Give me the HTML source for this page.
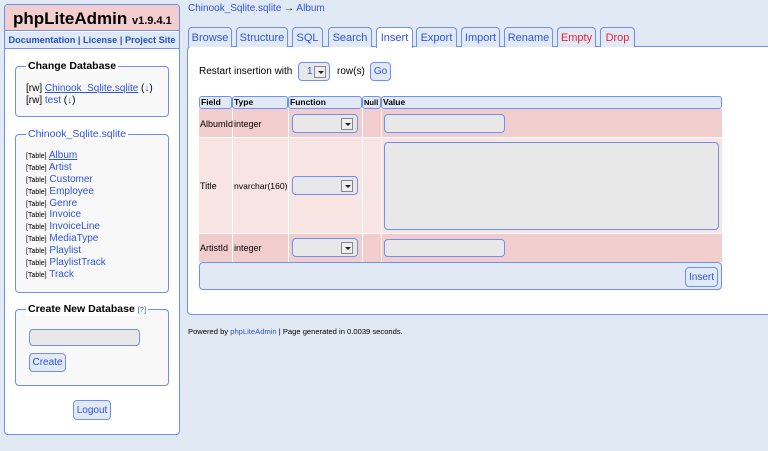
<!DOCTYPE html>
<html><head><meta charset="utf-8"><style>
*{box-sizing:border-box;margin:0;padding:0}
body{width:768px;height:451px;background:#e0e9f4;font-family:"Liberation Sans",Arial,sans-serif;position:relative;overflow:hidden;color:#000}
.a{position:absolute;white-space:nowrap}
a{color:#2f55e0;text-decoration:none}
.bl{border:1px solid #6f8ff5}
.side{left:4px;top:4px;width:176px;height:431px;background:#fff;border-radius:4px}
.hdr{left:5px;top:5px;width:174px;height:26px;background:#f2cece;border-bottom:1px solid #6f8ff5;border-radius:3px 3px 0 0}
.links{left:5px;top:32px;width:174px;height:17px;background:#e0e9f4;border-bottom:1px solid #6f8ff5;font-size:9.2px;font-weight:bold;text-align:center;line-height:17px;color:#2452c8}
.links a{color:#2452c8}
.fs{background:#f8f8f8;border-radius:4px;border:1px solid #6f8ff5}
.leg{background:#fff;padding:0 2px;font-size:10.5px;line-height:12px}
.tab{top:27px;height:20px;border:1px solid #6f8ff5;border-bottom:none;border-radius:4px 4px 0 0;background:#e0e9f4;font-size:11px;line-height:20px;text-align:center;color:#2f55e0}
.red{color:#f0203a}
.panel{left:187px;top:46px;width:590px;height:269px;background:#fff;border-radius:4px}
.th{top:96px;height:13px;background:#e0e9f4;border:1px solid #6f8ff5;border-radius:3px;font-size:8.5px;font-weight:bold;line-height:11px;padding-left:1px;overflow:hidden}
.sel{height:19px;width:66px;border:1px solid #6f8ff5;border-radius:4px;background:#e8e8e8}
.sel i{position:absolute;right:4px;top:3px;width:12px;height:12px;border:1px solid #888;background:#eee}
.sel i:after{content:"";position:absolute;left:3px;top:4px;border:3px solid transparent;border-top:3px solid #222}
.inp{border:1px solid #6f8ff5;border-radius:4px;background:#e8e8e8}
.td{font-size:9px;line-height:10px}
.btn{border:1px solid #6f8ff5;border-radius:4px;background:#e0e9f4;font-size:10px;color:#2f55e0;display:flex;align-items:center;justify-content:center}
.tl div{font-size:10px;line-height:11.9px;height:11.9px}
.tl small{font-size:7px;color:#000}
</style></head><body>
<div class="a side bl"></div>
<div class="a hdr"></div>
<div class="a" style="left:13px;top:8px;font-size:17px;font-weight:bold;line-height:22px">phpLiteAdmin <span style="font-size:11px">v1.9.4.1</span></div>
<div class="a links"><a>Documentation</a> | <a>License</a> | <a>Project Site</a></div>

<div class="a fs" style="left:15px;top:66px;width:154px;height:51px"></div>
<div class="a leg" style="left:26px;top:60px;font-weight:bold">Change Database</div>
<div class="a" style="left:26px;top:83px;font-size:10px;line-height:12px">[rw] <a style="text-decoration:underline">Chinook_Sqlite.sqlite</a> (<a>↓</a>)<br>[rw] <a>test</a> (<a>↓</a>)</div>

<div class="a fs" style="left:15px;top:134px;width:154px;height:159px"></div>
<div class="a leg" style="left:26px;top:128px;color:#2f55e0">Chinook_Sqlite.sqlite</div>
<div class="a tl" style="left:26px;top:150px">
<div><small>[Table]</small> <a style="text-decoration:underline">Album</a></div>
<div><small>[Table]</small> <a>Artist</a></div>
<div><small>[Table]</small> <a>Customer</a></div>
<div><small>[Table]</small> <a>Employee</a></div>
<div><small>[Table]</small> <a>Genre</a></div>
<div><small>[Table]</small> <a>Invoice</a></div>
<div><small>[Table]</small> <a>InvoiceLine</a></div>
<div><small>[Table]</small> <a>MediaType</a></div>
<div><small>[Table]</small> <a>Playlist</a></div>
<div><small>[Table]</small> <a>PlaylistTrack</a></div>
<div><small>[Table]</small> <a>Track</a></div></div>

<div class="a fs" style="left:15px;top:309px;width:154px;height:77px"></div>
<div class="a leg" style="left:26px;top:303px;font-weight:bold">Create New Database <a style="font-size:7.5px;font-weight:normal">[?]</a></div>
<div class="a inp" style="left:29px;top:329px;width:111px;height:17px"></div>
<div class="a btn" style="left:29px;top:353px;width:37px;height:19px">Create</div>
<div class="a btn" style="left:73px;top:400px;width:38px;height:20px">Logout</div>

<div class="a" style="left:188px;top:3px;font-size:10px;line-height:12px"><a>Chinook_Sqlite.sqlite</a> → <a>Album</a></div>
<div class="a panel bl"></div>
<div class="a tab" style="left:188px;width:44px">Browse</div>
<div class="a tab" style="left:236px;width:52px">Structure</div>
<div class="a tab" style="left:292px;width:31px">SQL</div>
<div class="a tab" style="left:328px;width:44px">Search</div>
<div class="a tab" style="left:376px;width:37px;height:21px;background:#fff;z-index:2">Insert</div>
<div class="a tab" style="left:416px;width:41px">Export</div>
<div class="a tab" style="left:461px;width:39px">Import</div>
<div class="a tab" style="left:504px;width:49px">Rename</div>
<div class="a tab red" style="left:557px;width:39px">Empty</div>
<div class="a tab red" style="left:600px;width:35px">Drop</div>

<div class="a" style="left:199px;top:65px;font-size:10px;line-height:13px">Restart insertion with</div>
<div class="a sel" style="left:298px;top:62px;width:32px"><span class="a" style="left:8px;top:3px;font-size:10px;color:#2f55e0">1</span><i style="right:3px"></i></div>
<div class="a" style="left:337px;top:65px;font-size:10px;line-height:13px">row(s)</div>
<div class="a btn" style="left:370px;top:62px;width:21px;height:19px">Go</div>

<div class="a th" style="left:199px;width:33px">Field</div>
<div class="a th" style="left:232px;width:56px">Type</div>
<div class="a th" style="left:288px;width:74px">Function</div>
<div class="a th" style="left:362px;width:19px;font-size:7.5px">Null</div>
<div class="a th" style="left:381px;width:341px">Value</div>

<div class="a" style="left:199px;top:109px;width:523px;height:28px;background:#f2cdcd"></div>
<div class="a" style="left:199px;top:138px;width:523px;height:95px;background:#f9e4e4"></div>
<div class="a" style="left:199px;top:234px;width:523px;height:28px;background:#f2cdcd"></div>
<div class="a" style="left:232px;top:109px;width:1px;height:153px;background:#fff"></div>
<div class="a" style="left:288px;top:109px;width:1px;height:153px;background:#fff"></div>
<div class="a" style="left:362px;top:109px;width:1px;height:153px;background:#fff"></div>
<div class="a" style="left:381px;top:109px;width:1px;height:153px;background:#fff"></div>
<div class="a" style="left:199px;top:137px;width:523px;height:1px;background:#fff"></div>
<div class="a" style="left:199px;top:233px;width:523px;height:1px;background:#fff"></div>

<div class="a td" style="left:200px;top:119px">AlbumId</div>
<div class="a td" style="left:234px;top:119px">integer</div>
<div class="a td" style="left:200px;top:181px">Title</div>
<div class="a td" style="left:234px;top:181px;font-size:8.6px">nvarchar(160)</div>
<div class="a td" style="left:200px;top:243px">ArtistId</div>
<div class="a td" style="left:234px;top:243px">integer</div>

<div class="a sel" style="left:292px;top:114px"><i></i></div>
<div class="a sel" style="left:292px;top:176px"><i></i></div>
<div class="a sel" style="left:292px;top:238px"><i></i></div>
<div class="a inp" style="left:384px;top:114px;width:121px;height:19px"></div>
<div class="a inp" style="left:384px;top:142px;width:335px;height:88px"></div>
<div class="a inp" style="left:384px;top:239px;width:121px;height:18px"></div>

<div class="a bl" style="left:199px;top:262px;width:523px;height:28px;background:#e0e9f4;border-radius:4px"></div>
<div class="a btn" style="left:685px;top:267px;width:33px;height:20px">Insert</div>

<div class="a" style="left:188px;top:327px;font-size:7.6px;line-height:10px">Powered by <a>phpLiteAdmin</a> | Page generated in 0.0039 seconds.</div>
</body></html>
